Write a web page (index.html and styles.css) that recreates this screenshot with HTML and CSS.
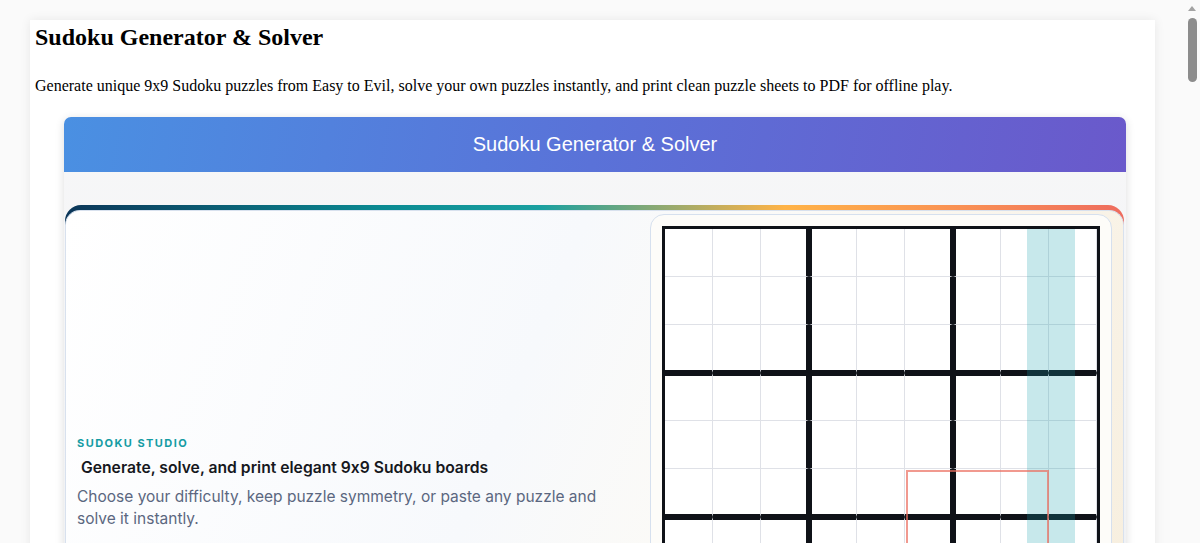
FILE: index.html
```html
<!DOCTYPE html>
<html lang="en">
<head>
<meta charset="utf-8">
<title>Sudoku Generator &amp; Solver</title>
<link rel="stylesheet" href="styles.css">
</head>
<body>
<div class="page">
  <h2 class="title">Sudoku Generator &amp; Solver</h2>
  <p class="intro">Generate unique 9x9 Sudoku puzzles from Easy to Evil, solve your own puzzles instantly, and print clean puzzle sheets to PDF for offline play.</p>
  <div class="app">
    <header class="app-header">Sudoku Generator &amp; Solver</header>
    <div class="app-body">
      <section class="card">
        <div class="card-inner">
          <div class="intro-col">
            <div class="eyebrow">SUDOKU STUDIO</div>
            <h3 class="headline">Generate, solve, and print elegant 9x9 Sudoku boards</h3>
            <p class="lede">Choose your difficulty, keep puzzle symmetry, or paste any puzzle and solve it instantly.</p>
          </div>
          <div class="board-panel">
            <div class="board">
              <div class="cell"></div><div class="cell"></div><div class="cell"></div><div class="cell"></div><div class="cell"></div><div class="cell"></div><div class="cell"></div><div class="cell"></div><div class="cell"></div>
              <div class="cell"></div><div class="cell"></div><div class="cell"></div><div class="cell"></div><div class="cell"></div><div class="cell"></div><div class="cell"></div><div class="cell"></div><div class="cell"></div>
              <div class="cell"></div><div class="cell"></div><div class="cell"></div><div class="cell"></div><div class="cell"></div><div class="cell"></div><div class="cell"></div><div class="cell"></div><div class="cell"></div>
              <div class="cell"></div><div class="cell"></div><div class="cell"></div><div class="cell"></div><div class="cell"></div><div class="cell"></div><div class="cell"></div><div class="cell"></div><div class="cell"></div>
              <div class="cell"></div><div class="cell"></div><div class="cell"></div><div class="cell"></div><div class="cell"></div><div class="cell"></div><div class="cell"></div><div class="cell"></div><div class="cell"></div>
              <div class="cell"></div><div class="cell"></div><div class="cell"></div><div class="cell"></div><div class="cell"></div><div class="cell"></div><div class="cell"></div><div class="cell"></div><div class="cell"></div>
              <div class="cell"></div><div class="cell"></div><div class="cell"></div><div class="cell"></div><div class="cell"></div><div class="cell"></div><div class="cell"></div><div class="cell"></div><div class="cell"></div>
              <div class="cell"></div><div class="cell"></div><div class="cell"></div><div class="cell"></div><div class="cell"></div><div class="cell"></div><div class="cell"></div><div class="cell"></div><div class="cell"></div>
              <div class="cell"></div><div class="cell"></div><div class="cell"></div><div class="cell"></div><div class="cell"></div><div class="cell"></div><div class="cell"></div><div class="cell"></div><div class="cell"></div>
              <div class="hl-col"></div>
              <div class="hl-box"></div>
            </div>
          </div>
        </div>
      </section>
    </div>
  </div>
</div>
<div class="scrollbar" aria-hidden="true">
  <div class="scroll-arrow"></div>
  <div class="scroll-thumb"></div>
</div>
</body>
</html>
```

FILE: styles.css
```css
html, body {
  margin: 0;
  padding: 0;
}
body {
  background: #fafafa;
  font-family: "Liberation Serif", "Times New Roman", serif;
}
.page {
  margin: 20px 45px 20px 30px;
  padding: 3px 5px 40px;
  background: #ffffff;
  box-shadow: 0 0 10px rgba(0, 0, 0, 0.08);
}
.title {
  margin: 0 0 26px;
  font-size: 24px;
  line-height: 28px;
  font-weight: bold;
  color: #000;
}
.intro {
  margin: 0 0 22px;
  font-size: 16px;
  line-height: 18px;
  color: #000;
}
.app {
  margin-left: 29px;
  width: 1062px;
  border-radius: 7px;
  background: linear-gradient(180deg, #f7f7f8 0%, #eef0f3 100%);
  box-shadow: 0 2px 10px rgba(0, 0, 0, 0.14);
}
.app-header {
  height: 55px;
  line-height: 55px;
  text-align: center;
  color: #ffffff;
  font-family: "Liberation Sans", Arial, sans-serif;
  font-size: 20px;
  border-radius: 7px 7px 0 0;
  background: linear-gradient(100deg, #4a90e2 0%, #5a72d8 50%, #6a59cb 100%);
}
.app-body {
  padding: 33px 2px 0 1px;
}
.card {
  border-radius: 16px 16px 0 0;
  padding-top: 5px;
  background: linear-gradient(90deg, #0b3558 0%, #0a8a92 30%, #1aa0a0 45%, #c9ae5a 62%, #ffb347 68%, #f98f54 85%, #ee6c5e 100%);
}
.card-inner {
  display: flex;
  padding: 3px 11px 0 11px;
  border: 1px solid #d8e1ee;
  border-bottom: none;
  border-radius: 15px 15px 0 0;
  background: linear-gradient(112deg, #ffffff 0%, #f7f9fc 42%, #fbfaf7 58%, #f7eedd 100%);
  font-family: Inter, "Noto Sans", sans-serif;
  font-feature-settings: "calt" 0;
}
.intro-col {
  flex: 1;
  padding: 222px 24px 0 0;
}
.eyebrow {
  font-size: 11px;
  line-height: 14px;
  font-weight: 700;
  letter-spacing: 1.45px;
  color: #159ca3;
}
.headline {
  margin: 8px 0 0;
  padding-left: 4px;
  font-size: 15.7px;
  line-height: 20px;
  font-weight: 600;
  color: #16181d;
}
.lede {
  margin: 8px 0 0;
  max-width: 545px;
  font-size: 15.5px;
  line-height: 22px;
  color: #5b6780;
}
.board-panel {
  flex: none;
  padding: 11px;
  border: 1px solid #d6e0ee;
  border-radius: 14px;
  background: #fdfcf9;
}
.board {
  position: relative;
  display: grid;
  grid-template-columns: repeat(9, 48px);
  grid-auto-rows: 48px;
  border: 3px solid #0f1218;
  background: #ffffff;
}
.cell {
  box-sizing: border-box;
  border-right: 1px solid #dfe1e7;
  border-bottom: 1px solid #dfe1e7;
}
.cell:nth-child(9n+3),
.cell:nth-child(9n+6) {
  border-right: 3px solid #0f1218;
}
.cell:nth-child(9n+4),
.cell:nth-child(9n+7) {
  border-left: 3px solid #0f1218;
}
.cell:nth-child(n+19):nth-child(-n+27),
.cell:nth-child(n+46):nth-child(-n+54) {
  border-bottom: 3px solid #0f1218;
}
.cell:nth-child(n+28):nth-child(-n+36),
.cell:nth-child(n+55):nth-child(-n+63) {
  border-top: 3px solid #0f1218;
}
.hl-col {
  position: absolute;
  top: 0;
  bottom: 0;
  left: 362px;
  width: 48px;
  background: rgba(20, 160, 170, 0.24);
}
.hl-box {
  position: absolute;
  left: 241px;
  top: 241px;
  width: 143px;
  height: 143px;
  box-sizing: border-box;
  border: 2px solid rgba(235, 110, 95, 0.7);
}
.scrollbar {
  position: fixed;
  top: 0;
  right: 0;
  bottom: 0;
  width: 15px;
  background: #fafafa;
}
.scroll-arrow {
  position: absolute;
  top: 6px;
  left: 3px;
  width: 0;
  height: 0;
  border-left: 4.5px solid transparent;
  border-right: 4.5px solid transparent;
  border-bottom: 5px solid #a3a3a3;
}
.scroll-thumb {
  position: absolute;
  top: 18px;
  left: 3px;
  width: 9px;
  height: 64px;
  border-radius: 5px;
  background: #8c8c8c;
}
```
